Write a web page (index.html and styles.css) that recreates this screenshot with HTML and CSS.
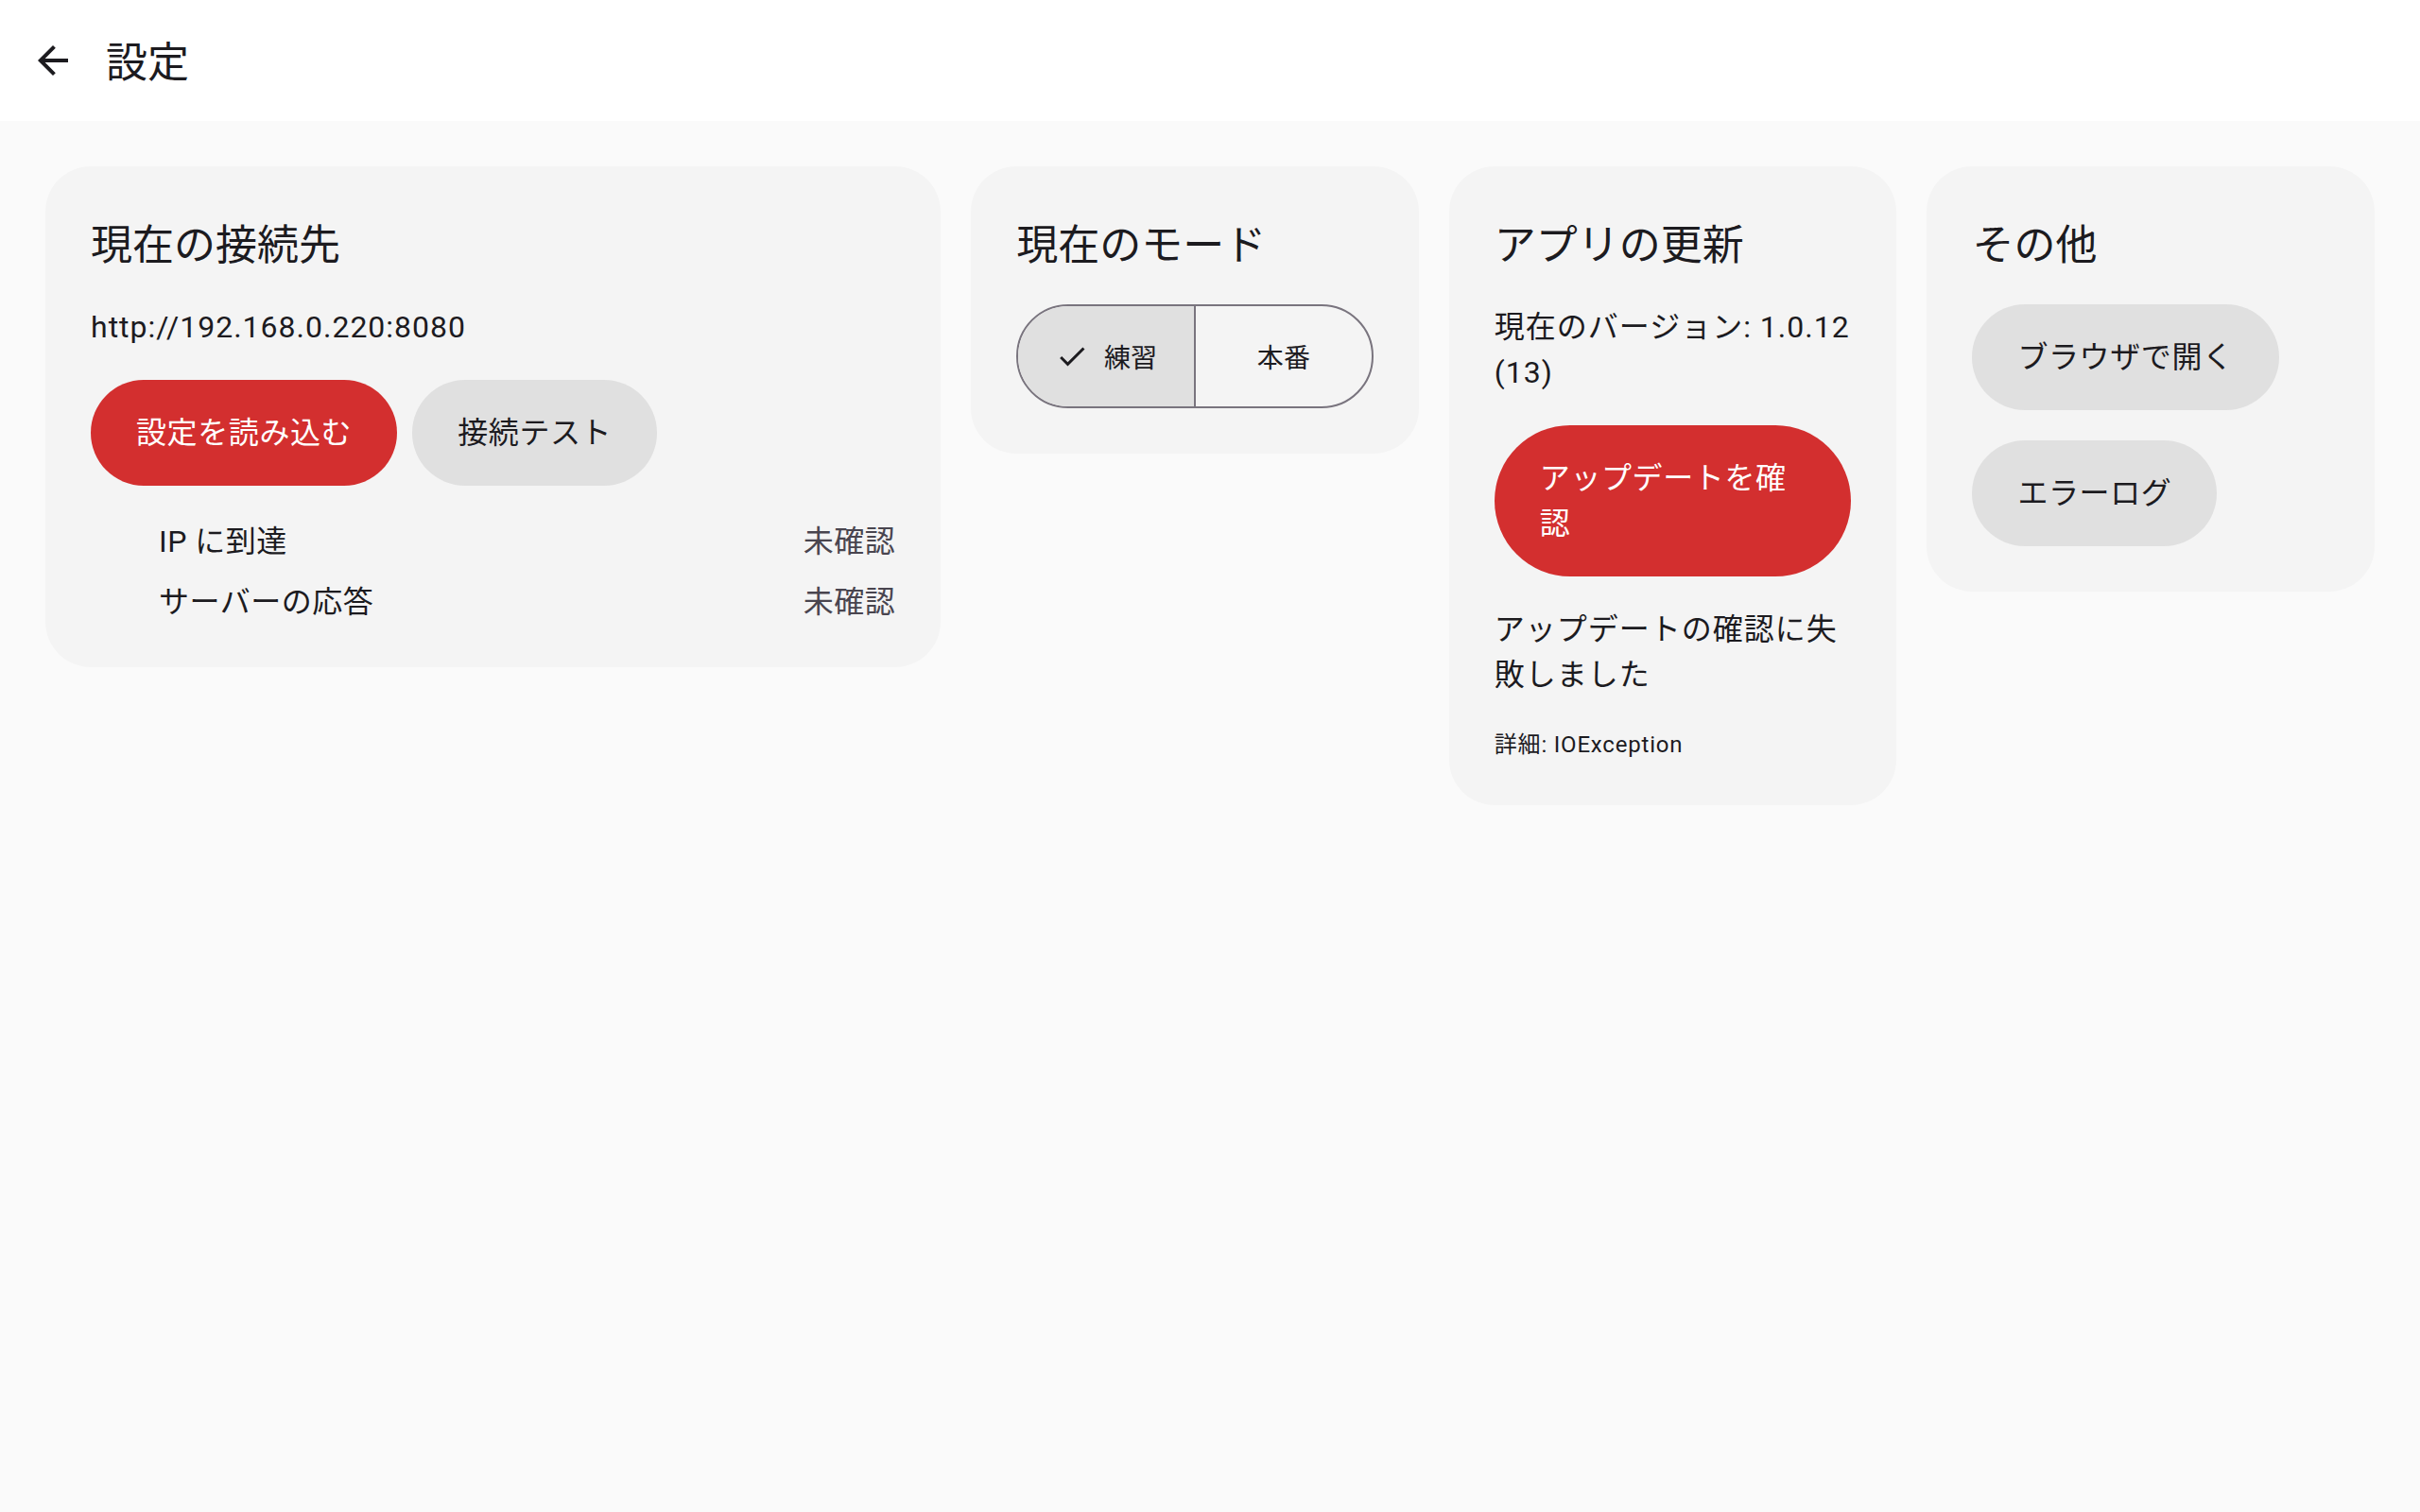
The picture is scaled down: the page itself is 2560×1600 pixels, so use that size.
FILE: index.html
```html
<!DOCTYPE html>
<html lang="ja">
<head>
<meta charset="utf-8">
<title>設定</title>
<link rel="stylesheet" href="styles.css">
</head>
<body>
<header class="topbar">
  <button class="nav-btn" aria-label="戻る">
    <svg class="nav-icon" viewBox="0 0 24 24"><path d="M20 11H7.83l5.59-5.59L12 4l-8 8 8 8 1.41-1.41L7.83 13H20v-2z"/></svg>
  </button>
  <h1 class="topbar-title">設定</h1>
</header>
<main class="content">
  <section class="card">
    <h2 class="card-title">現在の接続先</h2>
    <p class="body-text">http://192.168.0.220:8080</p>
    <div class="btn-row">
      <button class="btn btn-primary">設定を読み込む</button>
      <button class="btn btn-tonal">接続テスト</button>
    </div>
    <div class="status-list">
      <div class="status-row"><span class="status-label">IP に到達</span><span class="status-value">未確認</span></div>
      <div class="status-row"><span class="status-label">サーバーの応答</span><span class="status-value">未確認</span></div>
    </div>
  </section>
  <section class="card">
    <h2 class="card-title">現在のモード</h2>
    <div class="segmented">
      <button class="segment segment-selected">
        <svg class="check-icon" viewBox="0 0 24 24"><path d="M9 16.17L4.83 12l-1.42 1.41L9 19 21 7l-1.41-1.41z"/></svg>
        <span>練習</span>
      </button>
      <button class="segment"><span>本番</span></button>
    </div>
  </section>
  <section class="card">
    <h2 class="card-title">アプリの更新</h2>
    <p class="body-text">現在のバージョン: 1.0.12 (13)</p>
    <button class="btn btn-primary btn-block">アップデートを確認</button>
    <p class="body-text">アップデートの確認に失敗しました</p>
    <p class="small-text">詳細: IOException</p>
  </section>
  <section class="card">
    <h2 class="card-title">その他</h2>
    <div class="btn-col">
      <button class="btn btn-tonal">ブラウザで開く</button>
      <button class="btn btn-tonal">エラーログ</button>
    </div>
  </section>
</main>
</body>
</html>
```
FILE: styles.css
```css
* { box-sizing: border-box; }

html, body {
  margin: 0;
  padding: 0;
}

body {
  background: #fafafa;
  color: #1c1b1f;
  font-family: Roboto, "Noto Sans CJK JP", "Noto Sans", sans-serif;
  min-height: 1600px;
}

.topbar {
  height: 128px;
  background: #ffffff;
  display: flex;
  align-items: center;
  padding-left: 32px;
}

.nav-btn {
  width: 48px;
  height: 48px;
  padding: 0;
  border: 0;
  background: transparent;
  display: flex;
  align-items: center;
  justify-content: center;
}

.nav-icon {
  width: 48px;
  height: 48px;
  fill: #1c1b1f;
}

.topbar-title {
  margin: 6px 0 0 32px;
  font-size: 44px;
  font-weight: 400;
  line-height: 56px;
  color: #1c1b1f;
}

.content {
  padding: 48px;
  display: grid;
  grid-template-columns: minmax(0, 2fr) minmax(0, 1fr) minmax(0, 1fr) minmax(0, 1fr);
  gap: 32px;
  align-items: start;
}

.card {
  min-width: 0;
  background: #f4f4f4;
  border-radius: 48px;
  padding: 48px;
  display: flex;
  flex-direction: column;
  gap: 32px;
  align-items: flex-start;
}

.card-title {
  margin: 8px 0 2px;
  font-size: 44px;
  font-weight: 400;
  line-height: 56px;
  color: #1c1b1f;
}

.body-text {
  margin: 0;
  font-size: 32px;
  line-height: 48px;
  letter-spacing: 1px;
  color: #1c1b1f;
}

.small-text {
  margin: 2px 0 0;
  font-size: 24px;
  line-height: 32px;
  letter-spacing: 0.8px;
  color: #1c1b1f;
}

.btn-row {
  display: flex;
  gap: 16px;
}

.btn-col {
  display: flex;
  flex-direction: column;
  align-items: flex-start;
  gap: 32px;
}

.btn {
  border: 0;
  border-radius: 999px;
  padding: 32px 48px;
  font-family: inherit;
  font-size: 32px;
  line-height: 48px;
  letter-spacing: 0.6px;
  text-align: left;
  min-height: 112px;
}

.btn-primary {
  background: #d32f2f;
  color: #ffffff;
}

.btn-tonal {
  background: #e0e0e0;
  color: #1c1b1f;
}

.btn-block {
  max-width: 100%;
}

.status-list {
  align-self: stretch;
  display: flex;
  flex-direction: column;
  gap: 16px;
}

.status-row {
  height: 48px;
  padding-left: 72px;
  display: flex;
  align-items: center;
  justify-content: space-between;
  font-size: 32px;
  letter-spacing: 0.5px;
}

.status-label { color: #1c1b1f; }
.status-value { color: #49454f; }

.segmented {
  align-self: stretch;
  height: 110px;
  display: flex;
  border: 2px solid #79747e;
  border-radius: 999px;
  overflow: hidden;
}

.segment {
  flex: 1 1 0;
  border: 0;
  background: transparent;
  display: flex;
  align-items: center;
  justify-content: center;
  gap: 16px;
  font-family: inherit;
  font-size: 28px;
  letter-spacing: 0.2px;
  color: #1c1b1f;
  padding: 0;
}

.segment + .segment {
  border-left: 2px solid #79747e;
}

.segment-selected {
  background: #e0e0e0;
}

.check-icon {
  width: 36px;
  height: 36px;
  fill: #1c1b1f;
}
```
